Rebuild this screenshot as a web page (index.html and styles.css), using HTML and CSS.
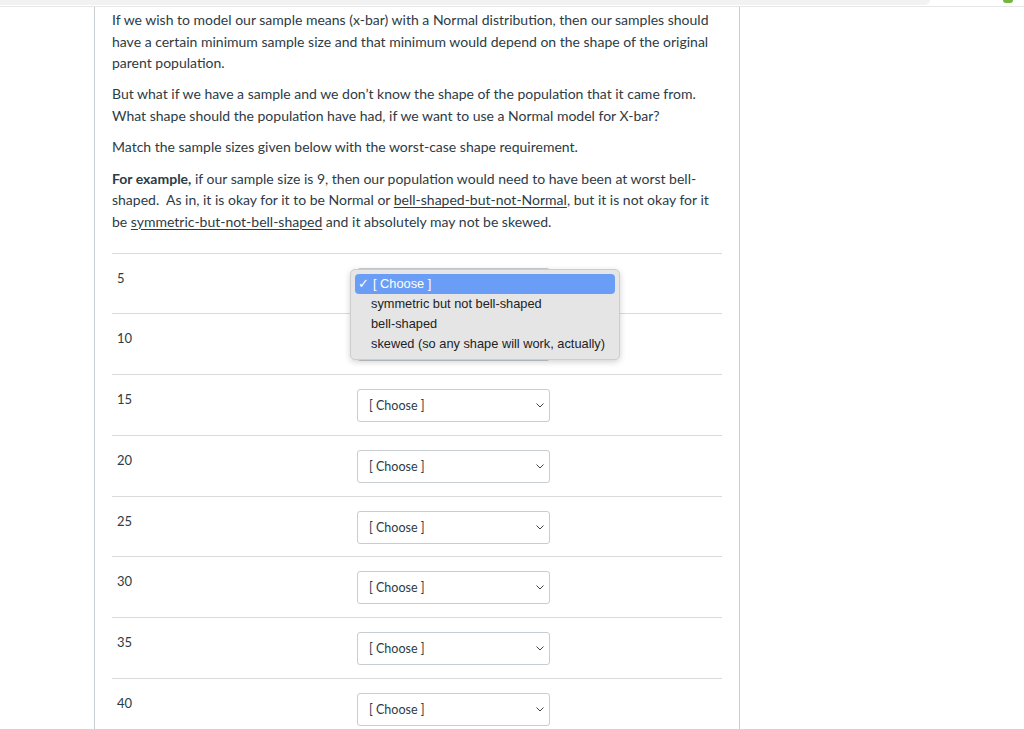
FILE: index.html
```html
<!DOCTYPE html>
<html>
<head>
<meta charset="utf-8">
<link rel="stylesheet" href="styles.css">
</head>
<body>
<div class="topbar">
  <div class="tab"></div>
  <div class="dot"></div>
</div>
<div class="wrap">
  <p>If we wish to model our sample means (x-bar) with a Normal distribution, then our samples should have a certain minimum sample size and that minimum would depend on the shape of the original parent population.</p>
  <p>But what if we have a sample and we don’t know the shape of the population that it came from. What shape should the population have had, if we want to use a Normal model for X-bar?</p>
  <p>Match the sample sizes given below with the worst-case shape requirement.</p>
  <p class="last"><strong>For example,</strong> if our sample size is 9, then our population would need to have been at worst bell-shaped.&nbsp; As in, it is okay for it to be Normal or <u>bell-shaped-but-not-Normal</u>, but it is not okay for it be <u>symmetric-but-not-bell-shaped</u> and it absolutely may not be skewed.</p>

  <div class="rows">
    <div class="row">
      <div class="num">5</div>
      <div class="select"><span>[ Choose ]</span><svg class="chev" width="8" height="5" viewBox="0 0 8 5"><path d="M0.5 0.5 L4 4 L7.5 0.5" fill="none" stroke="#444" stroke-width="1"/></svg></div>
      <div class="menu">
        <div class="item active"><span class="check">✓</span>[ Choose ]</div>
        <div class="item">symmetric but not bell-shaped</div>
        <div class="item">bell-shaped</div>
        <div class="item">skewed (so any shape will work, actually)</div>
      </div>
    </div>
    <div class="row">
      <div class="num">10</div>
      <div class="select"><span>[ Choose ]</span><svg class="chev" width="8" height="5" viewBox="0 0 8 5"><path d="M0.5 0.5 L4 4 L7.5 0.5" fill="none" stroke="#444" stroke-width="1"/></svg></div>
    </div>
    <div class="row">
      <div class="num">15</div>
      <div class="select"><span>[ Choose ]</span><svg class="chev" width="8" height="5" viewBox="0 0 8 5"><path d="M0.5 0.5 L4 4 L7.5 0.5" fill="none" stroke="#444" stroke-width="1"/></svg></div>
    </div>
    <div class="row">
      <div class="num">20</div>
      <div class="select"><span>[ Choose ]</span><svg class="chev" width="8" height="5" viewBox="0 0 8 5"><path d="M0.5 0.5 L4 4 L7.5 0.5" fill="none" stroke="#444" stroke-width="1"/></svg></div>
    </div>
    <div class="row">
      <div class="num">25</div>
      <div class="select"><span>[ Choose ]</span><svg class="chev" width="8" height="5" viewBox="0 0 8 5"><path d="M0.5 0.5 L4 4 L7.5 0.5" fill="none" stroke="#444" stroke-width="1"/></svg></div>
    </div>
    <div class="row">
      <div class="num">30</div>
      <div class="select"><span>[ Choose ]</span><svg class="chev" width="8" height="5" viewBox="0 0 8 5"><path d="M0.5 0.5 L4 4 L7.5 0.5" fill="none" stroke="#444" stroke-width="1"/></svg></div>
    </div>
    <div class="row">
      <div class="num">35</div>
      <div class="select"><span>[ Choose ]</span><svg class="chev" width="8" height="5" viewBox="0 0 8 5"><path d="M0.5 0.5 L4 4 L7.5 0.5" fill="none" stroke="#444" stroke-width="1"/></svg></div>
    </div>
    <div class="row">
      <div class="num">40</div>
      <div class="select"><span>[ Choose ]</span><svg class="chev" width="8" height="5" viewBox="0 0 8 5"><path d="M0.5 0.5 L4 4 L7.5 0.5" fill="none" stroke="#444" stroke-width="1"/></svg></div>
    </div>
  </div>
</div>
</body>
</html>
```

FILE: styles.css
```css
html, body {
  margin: 0;
  padding: 0;
  background: #fff;
  overflow: hidden;
}
body {
  font-family: Lato, "Open Sans", sans-serif;
  color: #2d3b45;
  height: 729px;
}
.topbar {
  height: 6px;
  border-bottom: 1px solid #e6e6e6;
  position: relative;
}
.tab {
  width: 930px;
  height: 5px;
  background: #f2f2f3;
  border-radius: 0 0 8px 0;
}
.dot {
  position: absolute;
  left: 1003px;
  top: 0;
  width: 10px;
  height: 3px;
  background: #74b63e;
  border-radius: 0 0 5px 5px;
}
.wrap {
  margin-left: 94px;
  width: 610px;
  border-left: 1px solid #c7cdd1;
  border-right: 1px solid #c7cdd1;
  padding: 2px 17px 0 17px;
  height: 740px;
}
p {
  margin: 0 0 9.5px 0;
  font-size: 14px;
  line-height: 21.5px;
}
p.last {
  padding-top: 1px;
  margin-bottom: 8.5px;
}
u {
  text-decoration-thickness: 1px;
  text-underline-offset: 2px;
}
.rows {
  padding-top: 12px;
}
.row {
  position: relative;
  box-sizing: border-box;
  height: 60.75px;
  border-top: 1px solid #dadada;
  display: flex;
  align-items: flex-start;
  padding-top: 14px;
}
.num {
  width: 240px;
  padding-left: 5px;
  font-size: 13px;
  line-height: 21px;
}
.select {
  box-sizing: border-box;
  width: 193px;
  height: 33px;
  border: 1px solid #c7cdd1;
  border-radius: 3px;
  background: #fff;
  display: flex;
  align-items: center;
  justify-content: space-between;
  padding: 0 5px 0 11px;
  font-size: 12.5px;
}
.chev {
  display: block;
}
.menu {
  position: absolute;
  left: 238px;
  top: 15px;
  width: 270px;
  box-sizing: border-box;
  height: 91px;
  background: #e5e5e5;
  border: 1px solid #cdcdcd;
  border-radius: 5px;
  box-shadow: 0 2px 6px rgba(0,0,0,0.18);
  padding: 4px 4px;
  font-family: "Liberation Sans", Arial, sans-serif;
  font-size: 12.8px;
  color: #222;
  z-index: 5;
}
.item {
  height: 20px;
  line-height: 20px;
  padding-left: 16px;
  position: relative;
}
.item.active {
  background: #6a9ef6;
  color: #fff;
  border-radius: 4px;
  padding-left: 18px;
}
.check {
  position: absolute;
  left: 3px;
  top: 0;
}
```
